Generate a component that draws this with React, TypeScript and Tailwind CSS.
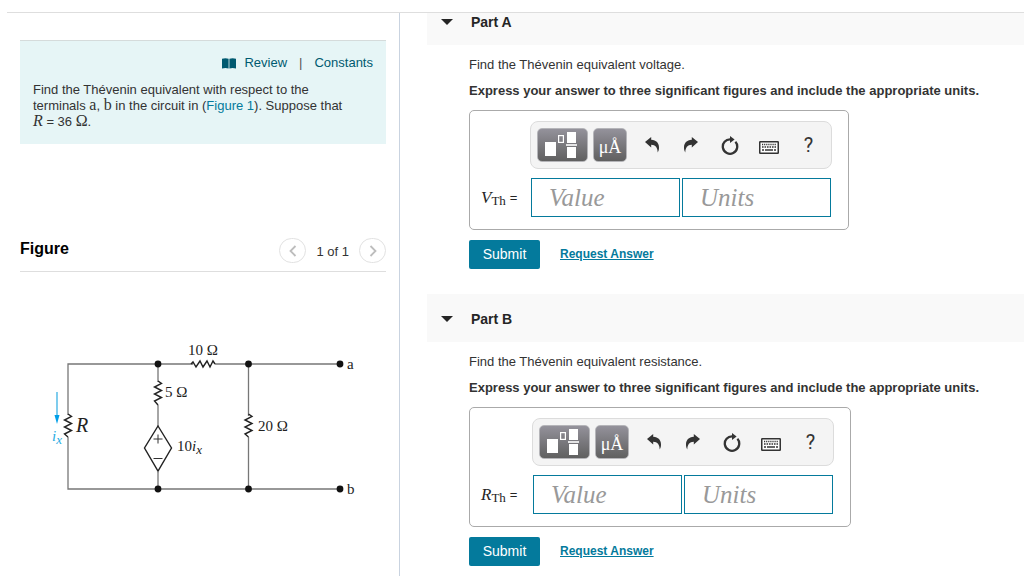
import React, { useState } from 'react';

interface Part {
  id: string;
  title: string;
  prompt: string;
  symbol: string;
  labelClass: string;
}

const parts: Part[] = [
  { id: 'a', title: 'Part A', prompt: 'Find the Thévenin equivalent voltage.', symbol: 'V', labelClass: 'w-[49px]' },
  { id: 'b', title: 'Part B', prompt: 'Find the Thévenin equivalent resistance.', symbol: 'R', labelClass: 'w-[51px]' },
];

const serif = "font-['Liberation_Serif',serif]";

const BookIcon = () => (
  <svg width="14" height="11" viewBox="0 0 14 11" fill="#005a70" aria-hidden="true">
    <path d="M0 .8Q3.5 -.4 6.6 .8V10.6Q3.5 9.4 0 10.6ZM7.4 .8Q10.5 -.4 14 .8V10.6Q10.5 9.4 7.4 10.6Z" />
  </svg>
);

const UndoIcon = () => (
  <svg width="14" height="16" viewBox="0 0 14 16" fill="#333" aria-hidden="true">
    <path d="M0 5L6.2 0V2.8C11.4 3 14 6.2 14 10.4C14 12.4 13.6 13.8 12.7 15.4C12.6 10.6 10.6 8 6.2 7.8V10.4Z" />
  </svg>
);

const RedoIcon = () => (
  <svg width="14" height="16" viewBox="0 0 14 16" fill="#333" aria-hidden="true">
    <path d="M14 5L7.8 0V2.8C2.6 3 0 6.2 0 10.4C0 12.4 .4 13.8 1.3 15.4C1.4 10.6 3.4 8 7.8 7.8V10.4Z" />
  </svg>
);

const ResetIcon = () => (
  <svg width="18" height="19" viewBox="0 0 18 19" aria-hidden="true">
    <path d="M9.5 3.4A7.2 7.2 0 1 0 14.4 5.8" fill="none" stroke="#333" strokeWidth="2.3" />
    <path d="M9 0L13.6 3.4L9 7Z" fill="#333" />
  </svg>
);

const KeyboardIcon = () => (
  <svg width="20" height="13" viewBox="0 0 20 13" aria-hidden="true">
    <rect x=".75" y=".75" width="18.5" height="11.5" rx=".5" fill="#fff" stroke="#333" strokeWidth="1.5" />
    <path d="M3 3.5H17" stroke="#333" strokeWidth="1.6" strokeDasharray="1.2 .9" />
    <path d="M3 6H17" stroke="#333" strokeWidth="1.6" strokeDasharray="1.6 .9" />
    <path d="M3 9H5M6 9H14M15 9H17" stroke="#333" strokeWidth="1.7" />
  </svg>
);

const TemplateIcon = () => (
  <svg width="32" height="26" viewBox="0 0 32 26" fill="#fff" aria-hidden="true">
    <rect x="0" y="10" width="11" height="14" />
    <rect x="13.6" y="3.6" width="4.8" height="6.8" fill="none" stroke="#fff" strokeWidth="1.2" />
    <rect x="22" y="0" width="9" height="11" />
    <rect x="21" y="12" width="11" height="2" opacity=".8" />
    <rect x="22" y="15" width="9" height="11" />
  </svg>
);

const Chevron = ({ d }: { d: string }) => (
  <svg width="8" height="12" viewBox="0 0 8 12" fill="none" stroke="#bdbdbd" strokeWidth="1.8" aria-hidden="true">
    <path d={d} />
  </svg>
);

const Circuit = () => (
  <svg viewBox="0 0 320 160" className="w-[320px] max-w-full font-['Liberation_Serif',serif]" role="img" aria-label="Circuit diagram">
    {/* wires */}
    <g fill="none" stroke="#777" strokeWidth="1.3">
      <path d="M153 24H28V75M28 97V149H300" />
      <path d="M175 24H300M118 24V42M118 65V86M118 132V149M208.5 24V76M208.5 97V149" />
    </g>
    {/* resistors */}
    <g fill="none" stroke="#222" strokeWidth="1.4" strokeLinejoin="miter">
      <path d="M151 24L153 22L156 27L160 21L163 27L167 21L170 27L173 21L175 24" />
      <path d="M118 41L121.5 43.5L114.5 47L121.5 50.5L114.5 54L121.5 57.5L114.5 61L118 65" />
      <path d="M28 74L31.5 76.5L24.5 80L31.5 83.5L24.5 87L31.5 90.5L24.5 94L28 97" />
      <path d="M208.5 74L212 76.5L205 80L212 83.5L205 87L212 90.5L205 94L208.5 97" />
      <path d="M118 86L131.5 108L118 131L104.5 108Z" />
    </g>
    {/* dependent source polarity */}
    <path d="M113.5 99H122.5M118 94.5V103.5M113.5 118.5H122.5" stroke="#333" strokeWidth="1" />
    {/* nodes */}
    <g fill="#111">
      <circle cx="118" cy="24" r="3.4" />
      <circle cx="208.5" cy="24" r="3.4" />
      <circle cx="300" cy="24" r="3.4" />
      <circle cx="118" cy="149" r="3.4" />
      <circle cx="208.5" cy="149" r="3.4" />
      <circle cx="300" cy="149" r="3.4" />
    </g>
    {/* controlling current */}
    <path d="M17 52V76" stroke="#29abe2" strokeWidth="1.2" />
    <path d="M14.5 75H19.5L17 84Z" fill="#009fe8" />
    <text x="12" y="101" fontSize="15" fontStyle="italic" fill="#29abe2">i<tspan dy="3" fontSize="13">x</tspan></text>
    <g fontSize="15" fill="#222">
      <text x="148" y="15">10 Ω</text>
      <text x="125" y="57">5 Ω</text>
      <text x="218" y="91">20 Ω</text>
      <text x="137" y="111">10<tspan fontStyle="italic">i</tspan><tspan dy="3" fontSize="13" fontStyle="italic">x</tspan></text>
      <text x="307" y="29">a</text>
      <text x="307" y="154">b</text>
      <text x="36" y="92" fontSize="20" fontStyle="italic">R</text>
    </g>
  </svg>
);

const toolButton = 'flex h-[34px] items-center justify-center rounded-[5px] bg-gradient-to-b from-[#94929b] to-[#606060] border border-[#b5b5b9] text-white';
const actionButton = 'flex h-[34px] w-[39px] items-center justify-center';

const Toolbar = () => (
  <div className="flex h-12 items-center rounded-lg border border-[#dcdcdc] bg-[#f4f4f4] pl-[6px] pr-1">
    <button type="button" aria-label="Templates" className={`${toolButton} mr-[5px] w-[51px] pr-1`}><TemplateIcon /></button>
    <button type="button" aria-label="Symbols" className={`${toolButton} ${serif} mr-[5px] w-[34px] pt-1 text-lg`}>μÅ</button>
    <button type="button" aria-label="Undo" className={actionButton}><UndoIcon /></button>
    <button type="button" aria-label="Redo" className={actionButton}><RedoIcon /></button>
    <button type="button" aria-label="Reset" className={actionButton}><ResetIcon /></button>
    <button type="button" aria-label="Keyboard shortcuts" className={`${actionButton} pt-1`}><KeyboardIcon /></button>
    <button type="button" aria-label="Help" className={`${actionButton} pl-[2px] font-[Roboto,sans-serif] text-xl text-[#333]`}>?</button>
  </div>
);

const inputClass = `h-[39px] w-[149px] border border-[#047a9c] bg-white pl-[17px] pr-2 ${serif} text-[25px] italic text-[#333] outline-none placeholder:text-[#999]`;

const PartSection = ({ part }: { part: Part }) => {
  const [open, setOpen] = useState(true);
  const [value, setValue] = useState('');
  const [units, setUnits] = useState('');

  return (
    <section className="mb-[25px]">
      <h2 className="bg-[#f9f9f9] text-sm font-bold text-[#252525]">
        <button type="button" aria-expanded={open} onClick={() => setOpen(!open)} className="flex h-12 w-full items-center gap-[18px] pl-[14px] pt-[2px]">
          <svg width="12" height="6" viewBox="0 0 12 6" fill="#252525" aria-hidden="true"><path d="M0 0H12L6 6Z" /></svg>
          {part.title}
        </button>
      </h2>
      {open && (
        <div className="pl-[42px] pt-[10px] text-[13px] leading-5 text-[#333]">
          <p>{part.prompt}</p>
          <p className="mt-[6px] font-bold">Express your answer to three significant figures and include the appropriate units.</p>
          <div className="mt-[9px] flex h-[120px] w-fit items-end rounded-[5px] border border-[#aaa] pb-3 pl-[11px] pr-4">
            <label htmlFor={`value-${part.id}`} className={`${part.labelClass} ${serif} flex h-[39px] items-center text-[#252525]`}>
              <span className="text-[17px] italic">{part.symbol}</span>
              <span className="pt-[6px] text-[13px]">Th</span>
              <span className="ml-1 text-[13px] font-['Liberation_Sans',sans-serif]">=</span>
            </label>
            <div className="flex flex-col gap-[9px]">
              <Toolbar />
              <div className="flex gap-[2px] pl-px">
                <input id={`value-${part.id}`} placeholder="Value" value={value} onChange={(e) => setValue(e.target.value)} className={inputClass} />
                <input aria-label="Units" placeholder="Units" value={units} onChange={(e) => setUnits(e.target.value)} className={inputClass} />
              </div>
            </div>
          </div>
          <div className="mt-[10px] flex h-[29px] items-center gap-5">
            <button type="button" className="h-[29px] w-[71px] rounded-xs bg-[#047a9c] pb-[2px] text-sm text-white">Submit</button>
            <a href="#answer" className="pb-px text-xs font-bold text-[#047a9c] underline">Request Answer</a>
          </div>
        </div>
      )}
    </section>
  );
};

const circleButton = 'flex h-[25px] w-[27px] items-center justify-center rounded-full border border-[#e2e2e2]';
const mathClass = `${serif} text-base leading-3`;

export default function App() {
  return (
    <div className="flex min-h-screen flex-col bg-white pl-[7px] pt-3 font-['Liberation_Sans',Arial,sans-serif] text-[#333]">
      <div className="flex flex-1 border-t border-[#dedede]">
        <aside className="w-[393px] shrink-0 border-r border-[#c9d3e0] px-[13px] pt-[27px]">
          <div className="border-t border-[#d5dbdb] bg-[#e6f5f6] px-[13px] pb-[14px] pt-3 text-[13px]">
            <div className="flex items-center justify-end leading-5 text-[#005a70]">
              <BookIcon />
              <a href="#review" className="ml-2">Review</a>
              <span className="mx-3 text-[#555]">|</span>
              <a href="#constants">Constants</a>
            </div>
            <p className="mt-[9px] pr-6 leading-4">
              Find the Thévenin equivalent with respect to the terminals <span className={mathClass}>a</span>, <span className={mathClass}>b</span> in the circuit in (<a href="#figure" className="text-[#047a9c]">Figure 1</a>). Suppose that <span className={`${mathClass} italic`}>R</span> = 36 <span className={mathClass}>Ω</span>.
            </p>
          </div>
          <div className="mt-[94px] flex items-center border-b border-[#dedede] pb-2">
            <h2 className="flex-1 pb-1 text-base font-bold leading-5 text-black">Figure</h2>
            <button type="button" aria-label="Previous figure" className={circleButton}><Chevron d="M6.5 1L1.5 6L6.5 11" /></button>
            <span className="mx-[10px] pt-[3px] text-[13px] leading-5">1 of 1</span>
            <button type="button" aria-label="Next figure" className={circleButton}><Chevron d="M1.5 1L6.5 6L1.5 11" /></button>
          </div>
          <div id="figure" className="ml-5 mt-[68px]">
            <Circuit />
          </div>
        </aside>
        <main className="min-w-0 flex-1 overflow-hidden pl-[27px]">
          <div className="-mt-4">
            {parts.map((part) => (
              <PartSection key={part.id} part={part} />
            ))}
          </div>
        </main>
      </div>
    </div>
  );
}
